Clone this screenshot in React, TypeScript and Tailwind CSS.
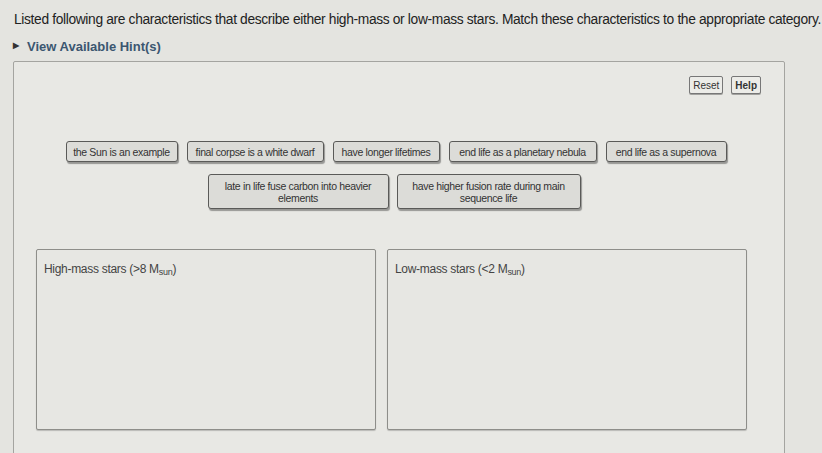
import React from 'react';

const row1 = [
  { text: 'the Sun is an example', w: 'w-[112px]' },
  { text: 'final corpse is a white dwarf', w: 'w-[137px]' },
  { text: 'have longer lifetimes', w: 'w-[107px]' },
  { text: 'end life as a planetary nebula', w: 'w-[148px]' },
  { text: 'end life as a supernova', w: 'w-[121px]' },
];

const row2 = [
  { text: 'late in life fuse carbon into heavier elements', w: 'w-[181px]' },
  { text: 'have higher fusion rate during main sequence life', w: 'w-[184px]' },
];

function Tile({ text, w, tall }: { text: string; w: string; tall?: boolean }) {
  return (
    <div
      className={`${w} ${tall ? 'h-[35px] px-2' : 'h-[21px] px-[2px] whitespace-nowrap'} flex items-center justify-center text-center rounded-[3px] border border-[#5a5a58] bg-[#dcdcd8] shadow-[1px_2px_1px_rgba(0,0,0,0.35)] text-[10.5px] leading-[12px] tracking-[-0.35px] text-[#333]`}
    >
      {text}
    </div>
  );
}

function Zone({ label, sym, w }: { label: string; sym: string; w: string }) {
  return (
    <div className={`${w} h-[181px] rounded-[2px] border border-[#8e8e8a] bg-[#e7e7e3] shadow-[0_1px_1px_rgba(0,0,0,0.2)] px-[7px] pt-[6px]`}>
      <span className="text-[12px] tracking-[-0.3px] text-[#444]">
        {label} ({sym}
        {sym === '>' ? '8' : '2'} M<sub className="text-[9px]">sun</sub>)
      </span>
    </div>
  );
}

export default function App() {
  return (
    <div className="w-[822px] h-[453px] overflow-hidden bg-[#e4e4e0] font-['Liberation_Sans',Arial,sans-serif] text-[#222]">
      <p className="pl-[14px] pt-[10px] text-[13.8px] tracking-[-0.35px] whitespace-nowrap">
        Listed following are characteristics that describe either high-mass or low-mass stars. Match these
        characteristics to the appropriate category.
      </p>
      <div className="flex items-center gap-[8px] pl-[13px] pt-[6px] text-[13px] font-bold text-[#3b5670]">
        <span className="text-[8px] text-[#333]">&#9654;</span>
        View Available Hint(s)
      </div>

      <div className="ml-[13px] mt-[5px] w-[772px] h-[420px] border border-[#a4a4a0] rounded-[2px] bg-[#e8e8e4]">
        <div className="flex justify-end gap-[8px] pr-[23px] pt-[14px]">
          <button className="h-[18px] px-[3px] border border-[#777] rounded-[2px] bg-[#ecece8] text-[10px] text-[#333] shadow-[0_1px_0_rgba(0,0,0,0.3)]">
            Reset
          </button>
          <button className="h-[18px] px-[3px] border border-[#777] rounded-[2px] bg-[#ecece8] text-[10px] font-bold text-[#333] shadow-[0_1px_0_rgba(0,0,0,0.3)]">
            Help
          </button>
        </div>

        <div className="flex flex-col items-center gap-[12px] pt-[47px] pr-[6px]">
          <div className="flex gap-[9px]">
            {row1.map((t) => (
              <Tile key={t.text} {...t} />
            ))}
          </div>
          <div className="flex gap-[8px] pr-[4px]">
            {row2.map((t) => (
              <Tile key={t.text} {...t} tall />
            ))}
          </div>
        </div>

        <div className="flex gap-[11px] pl-[22px] pt-[40px]">
          <Zone label="High-mass stars" sym=">" w="w-[340px]" />
          <Zone label="Low-mass stars" sym="<" w="w-[360px]" />
        </div>
      </div>
    </div>
  );
}
